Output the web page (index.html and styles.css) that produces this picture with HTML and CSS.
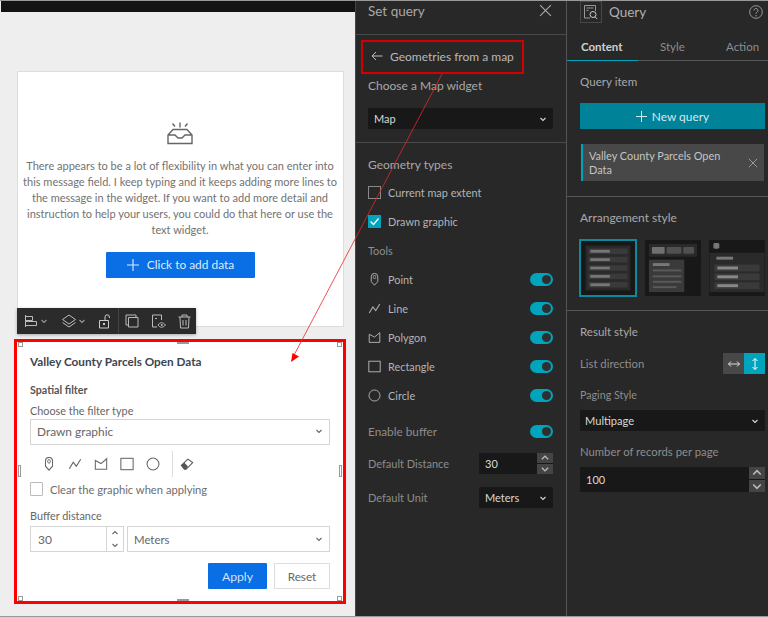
FILE: index.html
```html
<html>
  <head>
    <link rel="stylesheet" href="styles.css">
  </head>
  <body>
    <svg class="icon-defs" width="0" height="0">
      <symbol id="i-point" viewBox="0 0 16 16"><path d="M4 4.500a4 4 0 0 1 8 0v6L8 15l-4-4.500z" fill="none" stroke="currentColor" stroke-width="1.200"/><rect x="6.500" y="3" width="3" height="4" rx="1.500" fill="none" stroke="currentColor"/></symbol>
      <symbol id="i-line" viewBox="0 0 16 16"><path d="M1.500 13.500 6 6l3.500 4.500L14.500 2.500" fill="none" stroke="currentColor" stroke-width="1.300"/></symbol>
      <symbol id="i-polygon" viewBox="0 0 16 16"><path d="M1.500 4 8 7.500l6.500-5.500v12h-13z" fill="none" stroke="currentColor" stroke-width="1.200"/></symbol>
      <symbol id="i-rect" viewBox="0 0 16 16"><rect x="1" y="1.500" width="14" height="13" fill="none" stroke="currentColor" stroke-width="1.200"/></symbol>
      <symbol id="i-circle" viewBox="0 0 16 16"><circle cx="8" cy="8" r="6.800" fill="none" stroke="currentColor" stroke-width="1.200"/></symbol>
      <symbol id="i-chev" viewBox="0 0 8 8"><path d="M1.500 3 4 5.500 6.500 3" fill="none" stroke="currentColor" stroke-width="1.100"/></symbol>
      <symbol id="i-up" viewBox="0 0 8 8"><path d="M1.500 5 4 2.500 6.500 5" fill="none" stroke="currentColor" stroke-width="1.100"/></symbol>
      <symbol id="i-close" viewBox="0 0 12 12"><path d="M1 1l10 10M11 1 1 11" fill="none" stroke="currentColor"/></symbol>
    </svg>

    <div class="page">
      <div class="canvas">
        <div class="topbar"></div>

        <div class="message-card">
          <svg class="inbox-icon" width="28" height="24" viewBox="0 0 28 24">
            <path d="M2 21.500V13l5-5.500h14l5 5.500v8.500zM2 13h7l3 3h4l3-3h7M14 .5v5M6.500 1.500l2.500 3M21.500 1.500l-2.500 3" fill="none" stroke="#666" stroke-width="1.400"/>
          </svg>
          <p class="message-text">There appears to be a lot of flexibility in what you can enter into this message field. I keep typing and it keeps adding more lines to the message in the widget. If you want to add more detail and instruction to help your users, you could do that here or use the text widget.</p>
          <button class="add-data"><svg width="14" height="14" viewBox="0 0 14 14"><path d="M7 1v12M1 7h12" stroke="#dcebfb" stroke-width="1.100"/></svg>Click to add data</button>
        </div>

        <div class="widget">
          <div class="widget-title">Valley County Parcels Open Data</div>
          <div class="widget-sub">Spatial filter</div>
          <div class="widget-label">Choose the filter type</div>
          <div class="light-select"><span>Drawn graphic</span><svg class="chev"><use href="#i-chev"/></svg></div>
          <div class="draw-tools">
            <svg class="tool"><use href="#i-point"/></svg>
            <svg class="tool"><use href="#i-line"/></svg>
            <svg class="tool"><use href="#i-polygon"/></svg>
            <svg class="tool"><use href="#i-rect"/></svg>
            <svg class="tool"><use href="#i-circle"/></svg>
            <span class="tool-sep"></span>
            <svg class="tool eraser" viewBox="0 0 16 16"><path d="M1.500 9.500 9 2.500l5.500 4L7 14H5z" fill="none" stroke="#555" stroke-width="1.200"/><path d="M1.500 9.500 5 6.500l4 4L7 14H5z" fill="#555"/></svg>
          </div>
          <div class="clear-row"><span class="light-check"></span>Clear the graphic when applying</div>
          <div class="widget-label buffer-label">Buffer distance</div>
          <div class="buffer-row">
            <div class="light-number">
              <span>30</span>
              <div class="light-spin">
                <svg><use href="#i-up"/></svg>
                <svg><use href="#i-chev"/></svg>
              </div>
            </div>
            <div class="light-select unit"><span>Meters</span><svg class="chev"><use href="#i-chev"/></svg></div>
          </div>
          <div class="widget-actions">
            <button class="apply">Apply</button>
            <button class="reset">Reset</button>
          </div>
          <i class="handle h-tl"></i><i class="handle h-tr"></i><i class="handle h-bl"></i><i class="handle h-br"></i>
          <i class="handle h-t"></i><i class="handle h-b"></i><i class="handle h-l"></i><i class="handle h-r"></i>
        </div>

        <div class="toolbar">
          <svg width="14" height="14" viewBox="0 0 14 14"><path d="M1.500 1v12M1.500 2.500h7v4h-7M1.500 7.500h11v4h-11" fill="none" stroke="#bbb"/></svg>
          <svg class="tb-chev"><use href="#i-chev"/></svg>
          <svg width="16" height="15" viewBox="0 0 16 15" class="tb-layers"><path d="M8 1l6.500 4.500L8 10 1.500 5.500zM1.500 8.500 8 13l6.500-4.500" fill="none" stroke="#bbb"/></svg>
          <svg class="tb-chev tb-chev-near"><use href="#i-chev"/></svg>
          <svg width="13" height="15" viewBox="0 0 13 15" class="tb-gap"><path d="M1.500 6.500h9v7.500h-9zM7 6.500V3a2.200 2.200 0 0 1 4.400 0v1" fill="none" stroke="#ccc"/><rect x="5" y="9" width="2" height="2" fill="#ccc"/></svg>
          <span class="tb-sep"></span>
          <svg width="14" height="14" viewBox="0 0 14 14"><path d="M3.500 11H1V1h10v2.500M3.500 3.500h9.500V13H3.500z" fill="none" stroke="#bbb"/></svg>
          <svg width="16" height="15" viewBox="0 0 16 15" class="tb-wide"><path d="M6 13H1.500V1h9v5M4 4.500h2" fill="none" stroke="#bbb"/><path d="M7 11c2-3 5-3 7.500 0-2.500 3-5.500 3-7.500 0z" fill="none" stroke="#bbb"/><circle cx="10.800" cy="11" r="1" fill="#bbb"/></svg>
          <svg width="13" height="15" viewBox="0 0 13 15" class="tb-wide"><path d="M.5 3h12M4 3V1h5v2M2 3l.5 11h8L11 3M5 6v5.500M8 6v5.500" fill="none" stroke="#bbb"/></svg>
        </div>
      </div>

      <div class="panel set-query">
        <div class="set-head">
          <span>Set query</span>
          <svg class="close-x"><use href="#i-close"/></svg>
        </div>
        <div class="map-section">
          <div class="back-box">
            <svg width="12" height="10" viewBox="0 0 12 10"><path d="M11.500 5H1M5 1 1 5l4 4" fill="none" stroke="#c0c0c0"/></svg>
            <span>Geometries from a map</span>
          </div>
          <div class="label-row">Choose a Map widget</div>
          <div class="dark-select map-select"><span>Map</span><svg class="chev"><use href="#i-chev"/></svg></div>
        </div>
        <div class="geom-section">
          <div class="label-row">Geometry types</div>
          <div class="check-row first-check"><span class="dark-check"></span>Current map extent</div>
          <div class="check-row"><span class="dark-check on"><svg width="11" height="11" viewBox="0 0 11 11"><path d="M1.500 5.500l3 3 5-6" fill="none" stroke="#fff" stroke-width="1.300"/></svg></span>Drawn graphic</div>
          <div class="check-row muted">Tools</div>
          <div class="tool-row"><svg class="row-icon"><use href="#i-point"/></svg>Point<span class="switch"></span></div>
          <div class="tool-row"><svg class="row-icon"><use href="#i-line"/></svg>Line<span class="switch"></span></div>
          <div class="tool-row"><svg class="row-icon"><use href="#i-polygon"/></svg>Polygon<span class="switch"></span></div>
          <div class="tool-row"><svg class="row-icon"><use href="#i-rect"/></svg>Rectangle<span class="switch"></span></div>
          <div class="tool-row"><svg class="row-icon"><use href="#i-circle"/></svg>Circle<span class="switch"></span></div>
          <div class="tool-row muted buffer-toggle">Enable buffer<span class="switch"></span></div>
          <div class="field-row distance">
            <span class="muted">Default Distance</span>
            <div class="dark-number small">
              <span>30</span>
              <div class="dark-spin"><svg><use href="#i-up"/></svg><svg><use href="#i-chev"/></svg></div>
            </div>
          </div>
          <div class="field-row default-unit">
            <span class="muted">Default Unit</span>
            <div class="dark-select small"><span>Meters</span><svg class="chev"><use href="#i-chev"/></svg></div>
          </div>
        </div>
      </div>

      <div class="panel settings">
        <div class="settings-head">
          <span class="query-icon"><svg width="16" height="16" viewBox="0 0 16 16"><path d="M7 14H1.500V1.500h11V7M3.500 4h7M3.500 6.500h2" fill="none" stroke="#999"/><circle cx="10" cy="10.500" r="3" fill="none" stroke="#ccc"/><path d="M12 12.800l2.200 2.200" stroke="#ccc"/></svg></span>
          <span class="query-title">Query</span>
          <svg class="help" width="14" height="14" viewBox="0 0 14 14"><circle cx="7" cy="7" r="6.300" fill="none" stroke="#999"/><path d="M5 5.500a2 2 0 1 1 3 1.700c-.7.400-1 .8-1 1.600" fill="none" stroke="#999"/><circle cx="7" cy="10.700" r=".7" fill="#999"/></svg>
        </div>
        <div class="tabs">
          <span class="tab active">Content</span>
          <span class="tab">Style</span>
          <span class="tab">Action</span>
        </div>
        <div class="query-section">
          <div class="label-row">Query item</div>
          <button class="new-query"><svg width="11" height="11" viewBox="0 0 11 11"><path d="M5.500 0v11M0 5.500h11" stroke="#d5e8ec"/></svg>New query</button>
          <div class="query-item">
            <span>Valley County Parcels Open Data</span>
            <svg class="item-x"><use href="#i-close"/></svg>
          </div>
        </div>
        <div class="arrange-section">
          <div class="label-row">Arrangement style</div>
          <div class="thumbs">
            <svg class="thumb selected" viewBox="0 0 58 58"><rect x="5" y="5" width="48" height="48" fill="#2a2a2a"/><g fill="#3a3a3a"><rect x="8" y="8" width="42" height="6"/><rect x="8" y="17" width="42" height="6"/><rect x="8" y="26" width="42" height="6"/><rect x="8" y="35" width="42" height="6"/><rect x="8" y="44" width="42" height="6"/></g><g fill="#777"><rect x="10" y="9.500" width="21" height="3"/><rect x="10" y="18.500" width="21" height="3"/><rect x="10" y="27.500" width="21" height="3"/><rect x="10" y="36.500" width="21" height="3"/><rect x="10" y="45.500" width="21" height="3"/></g></svg>
            <svg class="thumb" viewBox="0 0 55 57"><rect x="3" y="4" width="49" height="13" fill="#2a2a2a"/><rect x="6" y="7" width="13" height="7" rx="1" fill="#707070"/><rect x="21" y="7" width="15" height="7" rx="1" fill="#505050"/><rect x="38" y="7" width="11" height="7" rx="1" fill="#505050"/><rect x="3" y="20" width="36" height="33" fill="#3a3a3a"/><rect x="7" y="23.500" width="17" height="3" fill="#777"/><g fill="#5a5a5a"><rect x="7" y="30" width="29" height="2"/><rect x="7" y="36" width="29" height="2"/><rect x="7" y="41.500" width="29" height="2"/><rect x="7" y="47" width="24" height="2"/></g></svg>
            <svg class="thumb" viewBox="0 0 56 57"><rect x="4" y="3" width="6" height="6" rx="1.500" fill="#777"/><rect x="0" y="13" width="56" height="40" fill="#2a2a2a"/><rect x="7" y="17" width="17" height="3" fill="#777"/><g fill="#3a3a3a"><rect x="5" y="25" width="46" height="7"/><rect x="5" y="34" width="46" height="7"/><rect x="5" y="43" width="46" height="7"/></g><g fill="#888"><rect x="8" y="27" width="21" height="3"/><rect x="8" y="36" width="21" height="3"/><rect x="8" y="45" width="21" height="3"/></g></svg>
          </div>
        </div>
        <div class="result-section">
          <div class="label-row">Result style</div>
          <div class="field-row direction">
            <span class="muted">List direction</span>
            <div class="dir-toggle">
              <span class="dir"><svg width="12" height="8" viewBox="0 0 12 8"><path d="M.5 4h11M3 1.500.5 4 3 6.500M9 1.500 11.500 4 9 6.500" fill="none" stroke="#ddd"/></svg></span>
              <span class="dir on"><svg width="8" height="12" viewBox="0 0 8 12"><path d="M4 .5v11M1.500 3 4 .5 6.500 3M1.500 9 4 11.500 6.500 9" fill="none" stroke="#fff"/></svg></span>
            </div>
          </div>
          <div class="label-row muted paging">Paging Style</div>
          <div class="dark-select wide"><span>Multipage</span><svg class="chev"><use href="#i-chev"/></svg></div>
          <div class="label-row muted records">Number of records per page</div>
          <div class="dark-number wide-number">
            <span>100</span>
            <div class="dark-spin"><svg><use href="#i-up"/></svg><svg><use href="#i-chev"/></svg></div>
          </div>
        </div>
      </div>

      <!-- red callout drawn over the panels -->
      <svg class="callout" width="768" height="617" viewBox="0 0 768 617">
        <path d="M442 74 292.500 358" stroke="#e8272a" stroke-width=".8" fill="none"/>
        <path d="M291 362l1.500-9 6.500 3.500z" fill="#f00"/>
      </svg>
    </div>
  </body>
</html>
```

FILE: styles.css
```css
* {
  box-sizing: border-box;
}

body {
  margin: 0;
  font-family: "Lato", "Open Sans", sans-serif;
  font-size: 12px;
  background-color: #fff;
}

button {
  font-family: inherit;
  border: 0;
  padding: 0;
}

.icon-defs {
  position: absolute;
}

.page {
  position: relative;
  display: flex;
  width: 768px;
  height: 617px;
  overflow: hidden;
  border-top: 1px solid #999;
  border-bottom: 1px solid #999;
}

.muted {
  color: #8d8d8d;
}

.chev {
  width: 8px;
  height: 8px;
  flex: none;
}

/* left canvas */
.canvas {
  position: relative;
  width: 355px;
  flex: none;
  padding-left: 1px;
  background-color: #eee;
}

.topbar {
  height: 11px;
  background-color: #131313;
}

.message-card {
  display: flex;
  flex-direction: column;
  align-items: center;
  width: 327px;
  height: 256px;
  margin: 59px 0 0 15.500px;
  padding-top: 50px;
  background-color: #fff;
  border: 1px solid #ddd;
}

.inbox-icon {
  flex: none;
}

.message-text {
  width: 322px;
  margin: 12px 0 0;
  font-size: 11px;
  line-height: 16px;
  color: #727272;
  text-align: center;
}

.add-data {
  display: flex;
  align-items: center;
  justify-content: center;
  gap: 7px;
  width: 149px;
  height: 26px;
  margin-top: 14px;
  padding-bottom: 1px;
  font-size: 11.900px;
  color: #dcebfb;
  background-color: #0a6fe4;
  border-radius: 1px;
}

.toolbar {
  position: absolute;
  left: 17px;
  top: 307px;
  display: flex;
  align-items: center;
  width: 179px;
  height: 26px;
  padding-left: 7px;
  background-color: #2b2b2b;
  box-shadow: 0 1px 3px rgba(0, 0, 0, 0.3);
}

.tb-chev {
  width: 8px;
  height: 8px;
  margin-left: 2px;
  color: #999;
}

.tb-chev-near {
  margin-left: 1px;
}

.tb-layers {
  margin-left: 13px;
}

.tb-gap {
  margin-left: 12px;
}

.tb-sep {
  width: 1px;
  height: 26px;
  margin: 0 6px 0 7px;
  background-color: #444;
}

.tb-wide {
  margin-left: 11.500px;
}

.widget {
  position: relative;
  width: 332px;
  height: 265px;
  margin: 12px 0 0 13px;
  padding: 12px 13px 0 13px;
  background-color: #fff;
  border: 3px solid #f00;
  color: #666;
}

.widget-title {
  font-size: 11.750px;
  font-weight: 700;
  line-height: 16px;
  color: #3d4450;
}

.widget-sub {
  margin-top: 12px;
  font-size: 10.700px;
  font-weight: 700;
  line-height: 16px;
  color: #555;
}

.widget-label {
  margin-top: 5px;
  font-size: 10.850px;
  line-height: 16px;
  color: #666;
}

.light-select {
  display: flex;
  align-items: center;
  justify-content: space-between;
  height: 26px;
  padding: 0 6px 2px;
  font-size: 11.900px;
  color: #666;
  background-color: #fff;
  border: 1px solid #d5d5d5;
}

.draw-tools {
  display: flex;
  align-items: center;
  height: 28px;
  margin-top: 5px;
  padding-left: 12px;
  color: #666;
}

.tool {
  width: 14px;
  height: 14px;
  margin-right: 12px;
}

.tool-sep {
  width: 1px;
  height: 26px;
  margin: 0 7px 0 0;
  background-color: #ddd;
}

.clear-row {
  display: flex;
  align-items: center;
  gap: 7px;
  height: 14px;
  margin-top: 4px;
  font-size: 11.200px;
  color: #6d6d6d;
}

.light-check {
  width: 13px;
  height: 14px;
  background-color: #fff;
  border: 1.500px solid #bbb;
  border-radius: 1px;
}

.buffer-label {
  margin-top: 12px;
}

.buffer-row {
  display: flex;
  gap: 3px;
  margin-top: 2px;
}

.light-number {
  display: flex;
  align-items: center;
  justify-content: space-between;
  width: 94px;
  height: 26px;
  padding-left: 7px;
  color: #666;
  border: 1px solid #d5d5d5;
}

.light-spin {
  display: flex;
  flex-direction: column;
  width: 17px;
  height: 24px;
  border-left: 1px solid #d5d5d5;
}

.light-spin svg {
  width: 8px;
  height: 8px;
  margin: 2px auto;
  color: #666;
}

.unit {
  flex: 1;
  padding-bottom: 0;
  font-size: 11.400px;
}

.widget-actions {
  display: flex;
  justify-content: flex-end;
  gap: 7px;
  margin-top: 11px;
}

.apply {
  width: 59px;
  height: 26px;
  font-size: 12.200px;
  color: #cfe2f9;
  background-color: #0a6fe4;
  border-radius: 1px;
}

.reset {
  width: 56px;
  height: 26px;
  font-size: 11.700px;
  color: #666;
  background-color: #fff;
  border: 1px solid #ddd;
}

.handle {
  position: absolute;
  background-color: #fff;
  border: 1px solid #999;
}

.h-tl,
.h-tr,
.h-bl,
.h-br {
  width: 5px;
  height: 5px;
}

.h-tl {
  left: 1px;
  top: 0;
}

.h-tr {
  right: 1px;
  top: 0;
}

.h-bl {
  left: 1px;
  bottom: 0;
}

.h-br {
  right: 1px;
  bottom: 0;
}

.h-t,
.h-b {
  left: 160px;
  width: 12px;
  height: 2px;
}

.h-t {
  top: 0;
}

.h-b {
  bottom: 0;
}

.h-l,
.h-r {
  top: 123px;
  width: 3px;
  height: 12px;
}

.h-l {
  left: 1px;
}

.h-r {
  right: 1px;
}

/* dark panels */
.panel {
  flex: none;
  background-color: #282828;
  color: #b4b4b4;
}

.set-query {
  width: 211px;
  border-left: 1px solid #444;
}

.settings {
  width: 202px;
  border-left: 1px solid #555;
}

.set-head {
  display: flex;
  justify-content: space-between;
  height: 34px;
  padding: 0 14px 0 12px;
  font-size: 13.500px;
  line-height: 20px;
  color: #a8a8a8;
  border-bottom: 1px solid #4a4a4a;
}

.close-x {
  width: 13px;
  height: 13px;
  margin-top: 3px;
  color: #aaa;
}

.map-section {
  height: 108px;
  padding: 5px 12px 0 5px;
  border-bottom: 1px solid #4a4a4a;
}

.back-box {
  display: flex;
  align-items: center;
  gap: 7px;
  width: 163px;
  height: 34px;
  padding: 0 0 2px 8px;
  font-size: 12px;
  color: #b8b8b8;
  border: 2px solid #d40000;
}

.label-row {
  line-height: 16px;
  font-size: 12px;
  color: #a9a9a9;
}

.map-section .label-row {
  margin: 4px 0 0 7px;
}

.dark-select {
  display: flex;
  align-items: center;
  justify-content: space-between;
  height: 21px;
  padding: 0 6px;
  color: #d8d8d8;
  background-color: #181818;
  border-radius: 1px;
}

.map-select {
  width: 185px;
  margin: 14px 0 0 7px;
  font-size: 11px;
}

.geom-section {
  padding: 14px 13px 0 12px;
}

.check-row,
.tool-row {
  display: flex;
  align-items: center;
  height: 29px;
  font-size: 10.900px;
}

.first-check {
  margin-top: 5px;
}

.dark-check {
  display: flex;
  align-items: center;
  justify-content: center;
  width: 13px;
  height: 13px;
  margin-right: 7px;
  border: 1.500px solid #888;
}

.dark-check.on {
  background-color: #00a5bd;
  border-color: #00a5bd;
}

.row-icon {
  width: 13px;
  height: 13px;
  margin-right: 7px;
  color: #b0b0b0;
}

.switch {
  position: relative;
  width: 23px;
  height: 13px;
  margin-left: auto;
  background-color: #00a5bd;
  border-radius: 7px;
}

.switch::after {
  content: "";
  position: absolute;
  right: 2px;
  top: 2px;
  width: 9px;
  height: 9px;
  background-color: #2f2f2f;
  border-radius: 50%;
}

.buffer-toggle {
  margin-top: 7px;
  font-size: 11.800px;
}

.field-row {
  display: flex;
  align-items: center;
  justify-content: space-between;
  font-size: 11px;
}

.distance {
  margin-top: 7px;
}

.default-unit {
  margin-top: 13px;
}

.small {
  width: 74px;
}

.dark-number {
  display: flex;
  align-items: center;
  justify-content: space-between;
  height: 21px;
  padding-left: 6px;
  color: #d8d8d8;
  background-color: #181818;
}

.dark-spin {
  display: flex;
  flex-direction: column;
  gap: 1px;
  width: 16px;
  height: 100%;
}

.dark-spin svg {
  flex: 1;
  width: 100%;
  min-height: 0;
  color: #bbb;
  background-color: #444;
}

.settings-head {
  display: flex;
  align-items: center;
  height: 22px;
  padding-left: 13px;
}

.query-icon {
  display: flex;
  align-items: center;
  justify-content: center;
  width: 22px;
  height: 22px;
  border: 1px solid #484848;
}

.query-title {
  margin-left: 7px;
  font-size: 13.500px;
  color: #b0b0b0;
}

.help {
  margin-left: auto;
  margin-right: 5px;
}

.tabs {
  position: relative;
  display: grid;
  grid-template-columns: 79px 66px auto;
  height: 38px;
  padding: 17px 0 0 14px;
  font-size: 11.500px;
  color: #8d8d8d;
  border-bottom: 1px solid #555;
}

.tab.active {
  font-weight: 700;
  color: #d0d0d0;
}

.tab.active::after {
  content: "";
  position: absolute;
  left: 0;
  bottom: -1px;
  width: 71px;
  height: 1px;
  background-color: #00a5bd;
}

.query-section {
  height: 136px;
  padding: 13px 3px 0 13px;
  border-bottom: 1px solid #555;
}

.query-section .label-row {
  font-size: 11.600px;
}

.new-query {
  display: flex;
  align-items: center;
  justify-content: center;
  gap: 5px;
  width: 185px;
  height: 26px;
  margin-top: 13px;
  font-size: 11.900px;
  color: #d5e8ec;
  background-color: #008299;
}

.query-item {
  display: flex;
  align-items: center;
  justify-content: space-between;
  width: 183px;
  height: 37px;
  margin: 15px 0 0 1px;
  padding: 0 6px 0 6px;
  font-size: 10.900px;
  line-height: 14px;
  color: #c4c4c4;
  background-color: #484848;
  border-left: 2px solid #00a5bd;
}

.query-item span {
  width: 145px;
}

.item-x {
  width: 10px;
  height: 10px;
  flex: none;
  color: #aaa;
}

.arrange-section {
  height: 114px;
  padding: 13px 0 0 12px;
  border-bottom: 1px solid #555;
}

.arrange-section .label-row {
  margin-left: 1px;
}

.thumbs {
  display: flex;
  gap: 8px;
  margin-top: 13px;
}

.thumb {
  width: 56px;
  height: 56px;
  margin-top: 1px;
  background-color: #181818;
}

.thumb.selected {
  width: 58px;
  height: 58px;
  margin-top: 0;
  border: 2px solid #0a8a9c;
}

.result-section {
  padding: 13px 3px 0 13px;
}

.result-section .label-row {
  font-size: 11.500px;
}

.direction {
  margin-top: 13px;
  font-size: 11.300px;
}

.dir-toggle {
  display: flex;
  width: 42px;
  height: 21px;
}

.dir {
  display: flex;
  align-items: center;
  justify-content: center;
  flex: 1;
  background-color: #484848;
}

.dir.on {
  background-color: #00a5bd;
}

.result-section .paging {
  margin-top: 13px;
  font-size: 10.700px;
  color: #8d8d8d;
}

.result-section .records {
  margin-top: 13px;
  font-size: 11.300px;
  color: #8d8d8d;
}

.wide {
  width: 185px;
  margin-top: 7px;
  padding-left: 5px;
  font-size: 11.100px;
}

.wide-number {
  width: 185px;
  height: 25px;
  margin-top: 7px;
  font-size: 11px;
}

.callout {
  position: absolute;
  left: 0;
  top: -1px;
  pointer-events: none;
}
```
